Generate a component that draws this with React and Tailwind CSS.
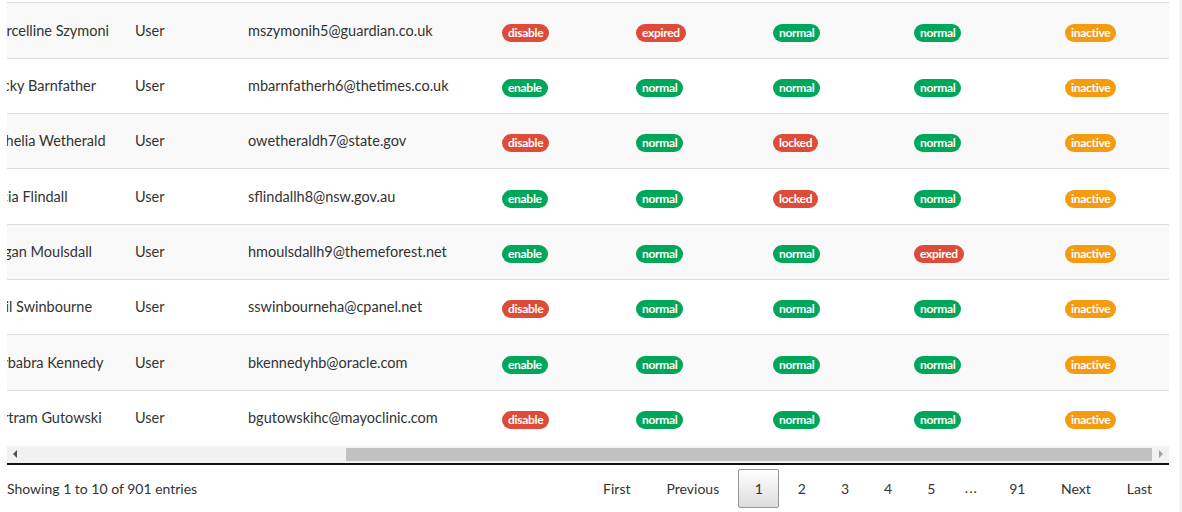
import React from "react";

const RED = "bg-[#dd4b39]";
const GREEN = "bg-[#00a65a]";
const ORANGE = "bg-[#f39c12]";

const colorOf = (t) =>
  t === "disable" || t === "expired" || t === "locked"
    ? RED
    : t === "inactive"
    ? ORANGE
    : GREEN;

const rows = [
  { name: "Marcelline Szymoni", email: "mszymonih5@guardian.co.uk", b: ["disable", "expired", "normal", "normal", "inactive"], h: "h-[56px]", bg: "bg-[#f9f9f9]" },
  { name: "Micky Barnfather", email: "mbarnfatherh6@thetimes.co.uk", b: ["enable", "normal", "normal", "normal", "inactive"], h: "h-[55px]", bg: "bg-white" },
  { name: "Ophelia Wetherald", email: "owetheraldh7@state.gov", b: ["disable", "normal", "locked", "normal", "inactive"], h: "h-[55px]", bg: "bg-[#f9f9f9]" },
  { name: "Lucia Flindall", email: "sflindallh8@nsw.gov.au", b: ["enable", "normal", "locked", "normal", "inactive"], h: "h-[56px]", bg: "bg-white" },
  { name: "Hagan Moulsdall", email: "hmoulsdallh9@themeforest.net", b: ["enable", "normal", "normal", "expired", "inactive"], h: "h-[55px]", bg: "bg-[#f9f9f9]" },
  { name: "Sibil Swinbourne", email: "sswinbourneha@cpanel.net", b: ["disable", "normal", "normal", "normal", "inactive"], h: "h-[55px]", bg: "bg-white" },
  { name: "Barbabra Kennedy", email: "bkennedyhb@oracle.com", b: ["enable", "normal", "normal", "normal", "inactive"], h: "h-[56px]", bg: "bg-[#f9f9f9]" },
  { name: "Bertram Gutowski", email: "bgutowskihc@mayoclinic.com", b: ["disable", "normal", "normal", "normal", "inactive"], h: "h-[55px]", bg: "bg-white" },
];

const pages = [
  { p: "First", c: "px-[16px]" },
  { p: "Previous", c: "px-[16px]" },
  { p: "1", c: "px-[15.5px]", cur: true },
  { p: "2", c: "px-[15.5px]" },
  { p: "3", c: "px-[15.5px]" },
  { p: "4", c: "px-[15.5px]" },
  { p: "5", c: "px-[15.5px]" },
  { p: "...", dots: true },
  { p: "91", c: "px-[15.5px]" },
  { p: "Next", c: "px-[16px]" },
  { p: "Last", c: "px-[16px]" },
];

function Badge({ t }) {
  return (
    <span
      className={`inline-flex items-center h-[18px] px-[6px] rounded-full text-white text-[12px] font-bold leading-none tracking-[-0.3px] ${colorOf(t)}`}
    >
      {t}
    </span>
  );
}

export default function App() {
  return (
    <div
      className="w-[1182px] h-[512px] bg-white text-[#333] text-[14.5px] flex overflow-hidden"
      style={{ fontFamily: "Lato, 'Open Sans', sans-serif" }}
    >
      <div className="ml-[7px] w-[1162px] flex flex-col">
        <div className="h-[2px]" />
        <div className="overflow-hidden">
          <table className="table-fixed border-collapse ml-[-29px] w-[1191px]">
            <colgroup>
              <col className="w-[149px]" />
              <col className="w-[113px]" />
              <col className="w-[254px]" />
              <col className="w-[134px]" />
              <col className="w-[137px]" />
              <col className="w-[141px]" />
              <col className="w-[151px]" />
              <col className="w-[112px]" />
            </colgroup>
            <tbody>
              {rows.map((r, i) => (
                <tr key={i} className={`${r.h} ${r.bg} border-t border-[#ddd]`}>
                  <td className="px-[8px] whitespace-nowrap overflow-hidden align-middle">{r.name}</td>
                  <td className="px-[8px] align-middle">User</td>
                  <td className="px-[8px] whitespace-nowrap align-middle">{r.email}</td>
                  {r.b.map((t, j) => (
                    <td key={j} className="px-[8px] align-middle pt-[2px]">
                      <Badge t={t} />
                    </td>
                  ))}
                </tr>
              ))}
            </tbody>
          </table>
        </div>
        {/* horizontal scrollbar */}
        <div className="h-[17px] bg-[#f1f1f1] flex items-center">
          <div className="w-[17px] flex justify-center items-center">
            <svg width="5" height="8" viewBox="0 0 5 8">
              <path d="M4 0 L0 4 L4 8 Z" fill="#505050" />
            </svg>
          </div>
          <div className="w-[322px]" />
          <div className="flex-1 h-[13px] bg-[#c1c1c1]" />
          <div className="w-[17px] flex justify-center items-center">
            <svg width="5" height="8" viewBox="0 0 5 8">
              <path d="M1 0 L5 4 L1 8 Z" fill="#a3a3a3" />
            </svg>
          </div>
        </div>
        <div className="h-[2px] bg-[#111]" />
        <div className="flex items-center justify-between mt-[4px] text-[14px]">
          <div className="pt-[1px]">Showing 1 to 10 of 901 entries</div>
          <div className="flex items-center">
            {pages.map((x, i) =>
              x.dots ? (
                <span key={i} className="px-[13px] leading-[20px] tracking-[1px]">...</span>
              ) : (
                <span
                  key={i}
                  className={`ml-[2px] ${x.c} py-[8px] leading-[21px] border rounded-[2px] ${
                    x.cur
                      ? "border-[#979797] bg-gradient-to-b from-white to-[#dcdcdc]"
                      : "border-transparent"
                  }`}
                >
                  {x.p}
                </span>
              )
            )}
          </div>
        </div>
      </div>
      <div className="flex-1" />
      <div className="w-[3px] bg-[#f3f3f3]" />
    </div>
  );
}
